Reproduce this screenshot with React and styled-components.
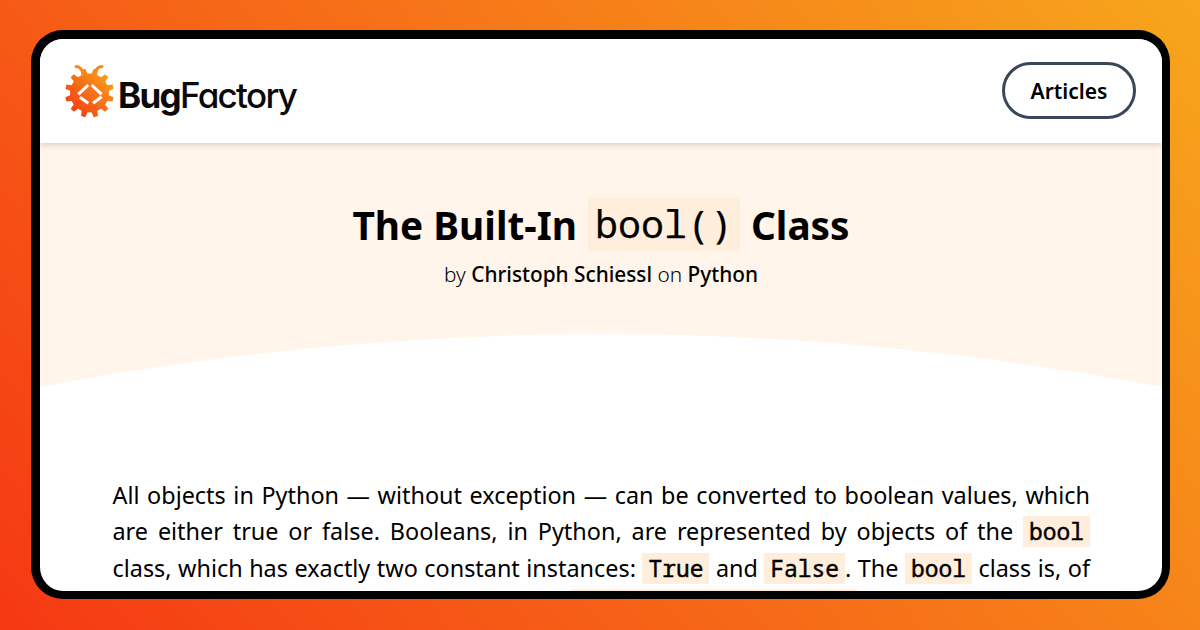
import React from "react";
import styled, { createGlobalStyle } from "styled-components";

const Global = createGlobalStyle`
  html, body { margin: 0; padding: 0; width: 1200px; height: 630px; overflow: hidden; }
  body { font-family: "Noto Sans", sans-serif; color: #000; }
`;

const Page = styled.div`
  width: 1200px;
  height: 630px;
  box-sizing: border-box;
  padding: 30px 30px 31px 31px;
  background: linear-gradient(50deg, #f53813 0%, #f7a61c 100%);
`;

const Frame = styled.div`
  width: 1139px;
  height: 569px;
  box-sizing: border-box;
  border-style: solid;
  border-color: #000;
  border-width: 9px 8px 8px 9px;
  border-radius: 32px;
  background: #fff;
  overflow: hidden;
  display: flex;
  flex-direction: column;
`;

const Header = styled.header`
  flex: none;
  height: 104px;
  box-sizing: border-box;
  padding: 0 26px 0 25px;
  display: flex;
  align-items: center;
  justify-content: space-between;
  background: #fff;
  box-shadow: 0 2px 6px rgba(60, 40, 20, 0.18);
  position: relative;
  z-index: 1;
`;

const Brand = styled.div`
  display: flex;
  align-items: center;
`;

const Wordmark = styled.div`
  font-family: Inter, sans-serif;
  font-feature-settings: "cv11" 1;
  font-size: 35px;
  line-height: 1;
  letter-spacing: -1.7px;
  font-weight: 500;
  color: #0a0a0a;
  margin: 8px 0 0 -1px;
`;

const WordBold = styled.span`
  font-weight: 700;
`;

const ArticlesButton = styled.a`
  width: 134px;
  height: 57px;
  box-sizing: border-box;
  border: 3px solid #3b4658;
  border-radius: 29px;
  margin-top: -1px;
  display: flex;
  align-items: center;
  justify-content: center;
  font-size: 21px;
  font-weight: 600;
  color: #000;
`;

const Hero = styled.section`
  flex: none;
  height: 244px;
  background: #fff5eb;
  display: flex;
  flex-direction: column;
  align-items: center;
  position: relative;
  padding-top: 54px;
  box-sizing: border-box;
`;

const Title = styled.h1`
  margin: 0;
  font-size: 38.8px;
  line-height: 54px;
  font-weight: 700;
  white-space: pre;
  display: flex;
  align-items: flex-start;
`;

const TitleWords = styled.span`
  position: relative;
  top: 1px;
`;

const TitleCode = styled.code`
  font-family: "Noto Sans Mono", "DejaVu Sans Mono", monospace;
  font-weight: 400;
  font-size: 38.3px;
  -webkit-text-stroke: 0.25px #000;
  background: #ffeedb;
  padding: 0 7px 2px;
  margin: 0 11px;
  line-height: 52px;
`;

const Byline = styled.p`
  margin: 3px 0 0;
  font-size: 20.8px;
  line-height: 40px;
  font-weight: 300;
`;

const Strong = styled.span`
  font-weight: 500;
`;

const Curve = styled.svg`
  position: absolute;
  left: 0;
  bottom: 0;
  display: block;
`;

const Article = styled.article`
  padding: 89.5px 72px 0 72.5px;
  font-size: 23.4px;
  line-height: 36.5px;
  text-align: justify;
`;

const InlineCode = styled.code`
  font-family: "Noto Sans Mono", "DejaVu Sans Mono", monospace;
  font-weight: 400;
  font-size: 22.9px;
  -webkit-text-stroke: 0.45px #000;
  line-height: 1;
  background: #ffeedb;
  padding: 0 6px;
`;

const Logo = () => {
  const teeth = Array.from({ length: 12 }, (_, i) => i * 30);
  return (
    <svg width="54" height="56" viewBox="0 0 54 56" aria-hidden="true">
      <defs>
        <linearGradient id="lg" gradientUnits="userSpaceOnUse" x1="5" y1="50" x2="45" y2="10">
          <stop offset="0" stopColor="#f43a14" />
          <stop offset="1" stopColor="#f9a51b" />
        </linearGradient>
      </defs>
      <g fill="url(#lg)">
        <circle cx="24.5" cy="30" r="19.5" />
        <path
          d={teeth
            .map((a) => {
              const r = ((a + 15) * Math.PI) / 180;
              const p = (rad, off) => {
                const t = r + off;
                return `${(24.5 + rad * Math.sin(t)).toFixed(2)} ${(30 - rad * Math.cos(t)).toFixed(2)}`;
              };
              return `M${p(18, -0.18)} L${p(24.5, -0.09)} L${p(24.5, 0.09)} L${p(18, 0.18)} Z`;
            })
            .join(" ")}
        />
      </g>
      <path d="M11 3.5 C15 3.5 17 6 18 11 M37 3.5 C33 3.5 31 6 29 11" fill="none" stroke="#f78a1a" strokeWidth="3" strokeLinecap="round" />
      <g stroke="#fff" strokeWidth="3" strokeLinecap="butt" fill="none">
        <path d="M13.3 31.3 L23.3 22" />
        <path d="M26.7 22 L36.7 31.3" />
        <path d="M36.7 33.7 L28 40.3" />
        <path d="M15 34.3 L23.3 40.3" />
      </g>
    </svg>
  );
};

export default function App() {
  return (
    <Page>
      <Global />
      <Frame>
        <Header>
          <Brand>
            <Logo />
            <Wordmark>
              <WordBold>Bug</WordBold>Factory
            </Wordmark>
          </Brand>
          <ArticlesButton>Articles</ArticlesButton>
        </Header>
        <Hero>
          <Title>
            <TitleWords>The Built-In</TitleWords>
            <TitleCode>bool()</TitleCode>
            <TitleWords>Class</TitleWords>
          </Title>
          <Byline>
            by <Strong>Christoph Schiessl</Strong> on <Strong>Python</Strong>
          </Byline>
          <Curve width="1122" height="53" viewBox="0 0 1122 53" preserveAspectRatio="none">
            <path d="M0 53 Q561 -53 1122 53 Z" fill="#fff" />
          </Curve>
        </Hero>
        <Article>
          All objects in Python — without exception — can be converted to boolean values, which are either true or false. Booleans, in Python, are represented by objects of the <InlineCode>bool</InlineCode> class, which has exactly two constant instances: <InlineCode>True</InlineCode> and <InlineCode>False</InlineCode>. The <InlineCode>bool</InlineCode> class is, of course, a subclass of the int class, so that <InlineCode>issubclass(bool,int)</InlineCode> holds true, and all of its values follow.
        </Article>
      </Frame>
    </Page>
  );
}
